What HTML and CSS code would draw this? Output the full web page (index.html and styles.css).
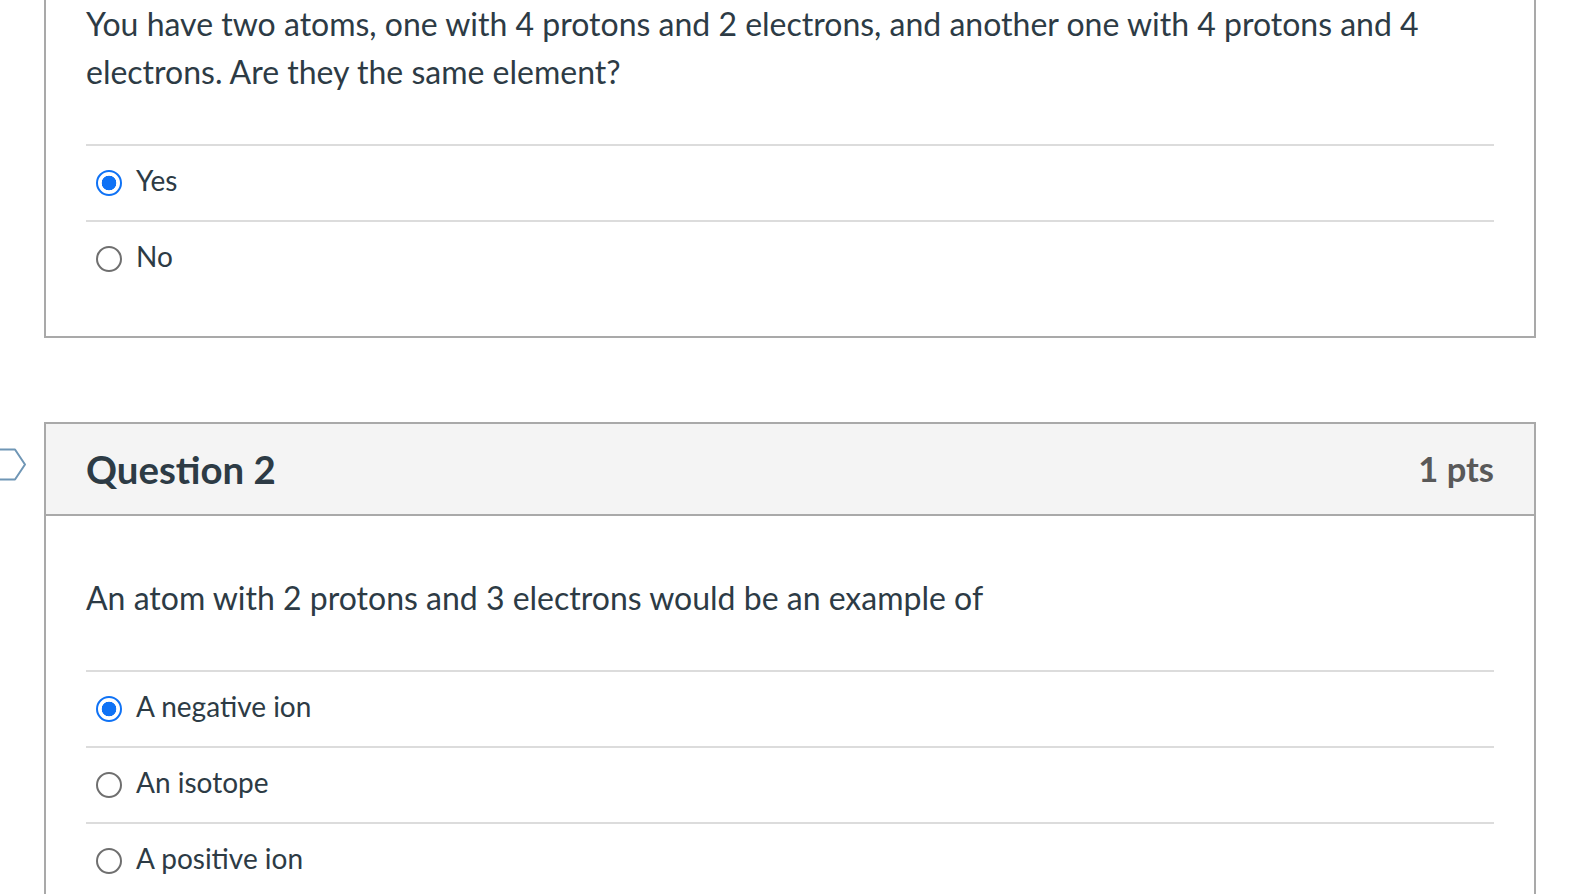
FILE: index.html
```html
<!DOCTYPE html>
<html lang="en">
<head>
    <meta charset="UTF-8">
    <meta name="viewport" content="width=device-width, initial-scale=1.0">
    <title>Quiz</title>
    <link rel="stylesheet" href="styles.css">
</head>
<body>
    <div class="quiz">

        <!-- question 1, scrolled so only its lower part shows -->
        <div class="question continued">
            <div class="question-body">
                <p class="question-text">You have two atoms, one with 4 protons and 2 electrons, and another one with 4 protons and 4 electrons. Are they the same element?</p>
                <div class="answers">
                    <label class="answer">
                        <input type="radio" name="q1" checked>
                        <span>Yes</span>
                    </label>
                    <label class="answer">
                        <input type="radio" name="q1">
                        <span>No</span>
                    </label>
                </div>
            </div>
        </div>

        <div class="question">
            <svg class="flag" width="28" height="34" viewBox="0 0 28 34">
                <path d="M0 1.5 H15 L25 16.5 L15 31.5 H0" fill="none" stroke="#6f96b5" stroke-width="2" stroke-linejoin="round"/>
            </svg>
            <div class="question-header">
                <h2>Question 2</h2>
                <span class="points">1 pts</span>
            </div>
            <div class="question-body">
                <p class="question-text">An atom with 2 protons and 3 electrons would be an example of</p>
                <div class="answers">
                    <label class="answer">
                        <input type="radio" name="q2" checked>
                        <span>A negative ion</span>
                    </label>
                    <label class="answer">
                        <input type="radio" name="q2">
                        <span>An isotope</span>
                    </label>
                    <label class="answer">
                        <input type="radio" name="q2">
                        <span>A positive ion</span>
                    </label>
                </div>
            </div>
        </div>

    </div>
</body>
</html>
```

FILE: styles.css
```css
body {
    font-family: Lato, "Noto Sans", sans-serif;
    margin: 0;
    padding: 0;
    background-color: #fff;
    color: #2d3b45;
    overflow: hidden;
}
.quiz {
    padding: 0 54px 0 44px;
    display: flex;
    flex-direction: column;
    gap: 84px;
}
.question {
    position: relative;
    border: 2px solid #a9a9a9;
}
.question.continued {
    border-top: none;
}
.question-header {
    display: flex;
    align-items: center;
    justify-content: space-between;
    height: 90px;
    padding: 0 40px;
    background-color: #f4f4f4;
    border-bottom: 2px solid #a9a9a9;
}
.question-header h2 {
    margin: 0;
    font-size: 38.4px;
    font-weight: bold;
    line-height: 1.2;
}
.points {
    font-size: 34.5px;
    font-weight: bold;
    color: #595959;
    line-height: 1.2;
}
.question-body {
    padding: 58px 40px 40px;
}
.continued .question-body {
    padding-top: 0;
}
.question-text {
    margin: 0 0 48px;
    font-size: 32px;
    line-height: 48px;
}
.answer {
    display: flex;
    align-items: center;
    height: 74px;
    border-top: 2px solid #dcdcdc;
    font-size: 28px;
}
.answer span {
    margin-bottom: 6px;
}
.answer input {
    appearance: none;
    box-sizing: border-box;
    width: 26px;
    height: 26px;
    margin: 0 14px 0 10px;
    border: 2px solid #6f6f6f;
    border-radius: 50%;
    background-color: #fff;
}
.answer input:checked {
    border: 2.5px solid #0f72f5;
    background: radial-gradient(circle, #0f72f5 0 7px, #fff 7.6px);
}
.flag {
    position: absolute;
    left: -46px;
    top: 24px;
}
```
